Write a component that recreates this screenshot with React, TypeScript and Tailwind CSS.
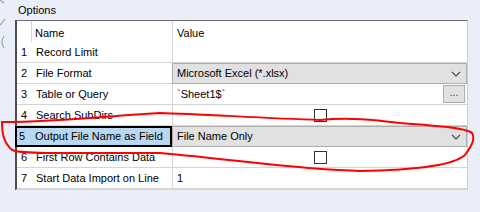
import React from "react";

const font = { fontFamily: '"Liberation Sans", Arial, sans-serif' };

function Chevron() {
  return (
    <svg width="10" height="6" viewBox="0 0 10 6" className="shrink-0">
      <path d="M1 1 L5 5 L9 1" fill="none" stroke="#4a4a4a" strokeWidth="1.1" />
    </svg>
  );
}

function Checkbox() {
  return <div className="w-[13px] h-[13px] bg-white border border-[#333333]" />;
}

type Row = { n: number; name: string; kind: "text" | "dropdown" | "check" | "browse" | "empty"; value?: string; selected?: boolean };

const rows: Row[] = [
  { n: 1, name: "Record Limit", kind: "empty" },
  { n: 2, name: "File Format", kind: "dropdown", value: "Microsoft Excel (*.xlsx)" },
  { n: 3, name: "Table or Query", kind: "browse", value: "`Sheet1$`" },
  { n: 4, name: "Search SubDirs", kind: "check" },
  { n: 5, name: "Output File Name as Field", kind: "dropdown", value: "File Name Only", selected: true },
  { n: 6, name: "First Row Contains Data", kind: "check" },
  { n: 7, name: "Start Data Import on Line", kind: "text", value: "1" },
];

function ValueCell({ r }: { r: Row }) {
  if (r.kind === "dropdown") {
    return (
      <div className="flex items-center justify-between bg-[#e1e1e1] border border-[#adadad] pl-[4px] pr-[5px] h-full">
        <span>{r.value}</span>
        <Chevron />
      </div>
    );
  }
  if (r.kind === "check") {
    return (
      <div className="flex items-center justify-center h-full border-b border-l border-[#d4d4d4]">
        <Checkbox />
      </div>
    );
  }
  if (r.kind === "browse") {
    return (
      <div className="flex items-center justify-between h-full border-b border-l border-[#d4d4d4] pl-[4px] pr-[2px]">
        <span>{r.value}</span>
        <div className="w-[22px] h-[18px] bg-[#e1e1e1] border border-[#adadad] flex items-center justify-center text-[#800080] text-[10px] leading-none pb-[2px]">
          ...
        </div>
      </div>
    );
  }
  return (
    <div className="flex items-center h-full border-b border-l border-[#d4d4d4] pl-[4px]">
      <span>{r.value ?? ""}</span>
    </div>
  );
}

export default function App() {
  return (
    <div className="relative w-[480px] h-[212px] bg-[#e9eef8] overflow-hidden text-[11px] text-black" style={font}>
      <div className="h-[20px] pl-[18px] pt-[4px] leading-[13px]">Options</div>
      <div className="ml-[15px] w-[453px] border-t border-t-[#6e6e6e] border-l-2 border-l-[#4d4d4d] border-r border-r-[#cfcfcf] border-b border-b-[#d4d4d4] bg-white">
        <div className="grid grid-cols-[15px_140px_1fr] h-[21px]">
          <div className="border-r border-[#d4d4d4]" />
          <div className="flex items-center pl-[3px] pt-[4px]">Name</div>
          <div className="flex items-center pl-[4px] pt-[4px] border-l border-[#d4d4d4]">Value</div>
        </div>
        {rows.map((r) => (
          <div key={r.n} className="grid grid-cols-[15px_140px_1fr] h-[21px]">
            {r.selected ? (
              <div className="col-span-2 -ml-[2px] flex items-center bg-[#bad7f2] border-2 border-black">
                <span className="w-[15px] pl-[2px] shrink-0">{r.n}</span>
                <span className="pl-[3px]">{r.name}</span>
              </div>
            ) : (
              <>
                <div className="flex items-center pl-[4px] border-b border-[#d4d4d4]">{r.n}</div>
                <div className="flex items-center pl-[4px] border-b border-[#d4d4d4] whitespace-nowrap">{r.name}</div>
              </>
            )}
            <ValueCell r={r} />
          </div>
        ))}
      </div>
      <svg className="absolute inset-0 pointer-events-none" width="480" height="212" viewBox="0 0 480 212">
        <path d="M4 3 L0 0 M5 19 Q3 22 0 25 M4 36 Q0 42 4 48" fill="none" stroke="#9aa6b8" strokeWidth="1.2" />
        <path
          d="M160 113 C 120 115, 60 122, 2 122 C 2 132, 3 142, 12 150 C 20 154, 60 153, 160 153 C 240 160, 300 170, 360 171 C 420 170, 455 164, 465 155 C 470 148, 476 140, 472 133 C 466 128, 440 126, 400 123 C 375 120, 350 117, 320 120 C 260 118, 200 114, 160 113"
          fill="none"
          stroke="#ff0000"
          strokeWidth="2"
        />
      </svg>
    </div>
  );
}
